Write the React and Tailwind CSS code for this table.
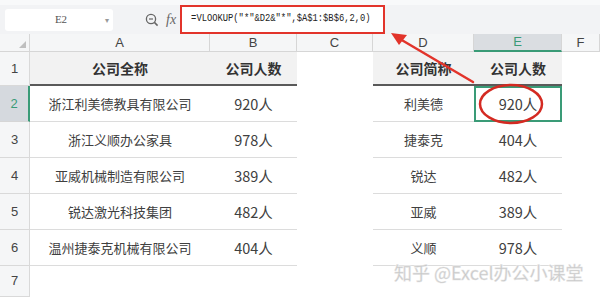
import React from "react";

const cols = ["A", "B", "C", "D", "E", "F"];

const left = [
  ["浙江利美德教具有限公司", "920人"],
  ["浙江义顺办公家具", "978人"],
  ["亚威机械制造有限公司", "389人"],
  ["锐达激光科技集团", "482人"],
  ["温州捷泰克机械有限公司", "404人"],
];

const right = [
  ["利美德", "920人"],
  ["捷泰克", "404人"],
  ["锐达", "482人"],
  ["亚威", "389人"],
  ["义顺", "978人"],
];

const font = { fontFamily: '"Noto Sans CJK SC", "Noto Sans", sans-serif' };

function Toolbar() {
  return (
    <div className="flex h-[34px] items-center bg-[#f2f3f5] border-t-[5px] border-[#f8f9fa]">
      <div className="ml-[5px] flex h-[22px] w-[108px] items-center rounded-[3px] bg-white">
        <span className="flex-1 pl-[12px] text-center text-[11px] text-[#555]" style={{ fontFamily: '"Liberation Serif", serif' }}>
          E2
        </span>
        <span className="pr-[4px] text-[8px] text-[#999]">▾</span>
      </div>
      <svg width="14" height="14" viewBox="0 0 14 14" className="ml-[32px]">
        <circle cx="6" cy="6" r="4.6" fill="none" stroke="#666" strokeWidth="1.3" />
        <line x1="4" y1="6" x2="8" y2="6" stroke="#666" strokeWidth="1.2" />
        <line x1="9.4" y1="9.4" x2="12.6" y2="12.6" stroke="#666" strokeWidth="1.5" />
      </svg>
      <span className="ml-[7px] text-[14px] italic text-[#666]" style={{ fontFamily: '"Liberation Serif", serif' }}>
        fx
      </span>
      <div className="ml-[4px] flex h-[29px] w-[205px] items-center border-[2.5px] border-[#e2342b] bg-white pl-[9px]">
        <span
          className="inline-block scale-y-125 whitespace-nowrap text-[8.8px] text-[#222]"
          style={{ fontFamily: '"Liberation Mono", monospace' }}
        >
          =VLOOKUP("*"&D2&"*",$A$1:$B$6,2,0)
        </span>
      </div>
    </div>
  );
}

function ColHeader() {
  return (
    <>
      <div className="flex items-end justify-end border-b border-r border-[#d6d6d6] bg-[#f5f6f7] pb-[3px] pr-[3px]">
        <span className="h-0 w-0 border-b-[7px] border-l-[7px] border-b-[#bfbfbf] border-l-transparent" />
      </div>
      {cols.map((c) => (
        <div
          key={c}
          className={
            c === "E"
              ? "flex items-center justify-center border-b-2 border-r border-b-[#3a9b77] border-r-[#d6d6d6] bg-[#dadde1] text-[13px] text-[#3a9b77]"
              : "flex items-center justify-center border-b border-r border-[#d6d6d6] bg-[#f5f6f7] text-[13px] text-[#444]"
          }
          style={{ fontFamily: '"Liberation Sans", sans-serif' }}
        >
          {c}
        </div>
      ))}
    </>
  );
}

function RowNum({ n, active }) {
  return (
    <div
      className={
        active
          ? "flex items-center justify-center border-b border-r-2 border-b-[#d6d6d6] border-r-[#3a9b77] bg-[#d5d9de] text-[13px] text-[#3a9b77]"
          : "flex items-center justify-center border-b border-r border-[#d9d9d9] bg-[#f5f6f7] text-[13px] text-[#444]"
      }
      style={{ fontFamily: '"Liberation Sans", sans-serif' }}
    >
      {n}
    </div>
  );
}

function Cell({ children, head, line, selected, num }) {
  let cls = "flex items-center justify-center ";
  const size = num ? "text-[14.5px] " : "text-[13px] ";
  if (head) cls += "bg-[#f2f2f2] border-b-2 border-[#5a5a5a] text-[14px] font-bold text-[#333]";
  else if (selected) cls += size + "border-2 border-[#3a9b77] text-[#404040]";
  else if (line) cls += size + "border-b border-[#dcdcdc] text-[#404040]";
  else cls += "text-[13px]";
  return (
    <div className={cls} style={font}>
      {children}
    </div>
  );
}

export default function App() {
  return (
    <div className="relative h-[297px] w-[600px] overflow-hidden bg-white" style={font}>
      <Toolbar />
      <div className="grid grid-cols-[30px_180px_87px_76px_101px_88px_38px] grid-rows-[18px_34px_36px_36px_36px_36px_36px_31px]">
        <ColHeader />

        <RowNum n={1} />
        <Cell head>公司全称</Cell>
        <Cell head>公司人数</Cell>
        <Cell />
        <Cell head>公司简称</Cell>
        <Cell head>公司人数</Cell>
        <Cell />

        {left.map((r, i) => (
          <React.Fragment key={i}>
            <RowNum n={i + 2} active={i === 0} />
            <Cell line>{r[0]}</Cell>
            <Cell line num>{r[1]}</Cell>
            <Cell />
            <Cell line>{right[i][0]}</Cell>
            <Cell line={i !== 0} selected={i === 0} num>
              {right[i][1]}
            </Cell>
            <Cell />
          </React.Fragment>
        ))}

        <RowNum n={7} />
        <Cell />
        <Cell />
        <Cell />
        <Cell />
        <Cell />
        <Cell />
      </div>

      {/* annotations drawn over the sheet */}
      <svg className="pointer-events-none absolute left-0 top-0" width="600" height="297">
        <ellipse cx="511" cy="104" rx="31" ry="19" fill="none" stroke="#d42a22" strokeWidth="2.5" />
        <line x1="473" y1="82" x2="400" y2="39" stroke="#e2342b" strokeWidth="2.5" strokeLinecap="round" />
        <polygon points="391,33 407,35 399,45" fill="#e2342b" />
      </svg>

      <div
        className="pointer-events-none absolute left-[394px] top-[259px] whitespace-nowrap text-[18px] text-[#c8c8c8]"
        style={{ WebkitTextStroke: "0.4px #e6e6e6", textShadow: "0 0 2px #fff, 0 0 2px #fff" }}
      >
        知乎 @Excel办公小课堂
      </div>
    </div>
  );
}
